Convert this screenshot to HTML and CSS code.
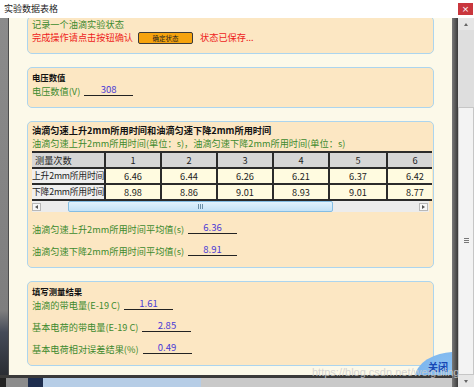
FILE: index.html
```html
<!DOCTYPE html>
<html lang="zh">
<head>
<meta charset="utf-8">
<title>实验数据表格</title>
<link rel="stylesheet" href="styles.css">
</head>
<body>
<div class="screen">
  <div class="titlebar">
    <span class="title">实验数据表格</span>
    <span class="win-close">×</span>
  </div>
  <div class="body">
    <div class="left-col">
      <div class="dialog-row">
        <div class="edge"></div>
        <div class="content">
          <div class="scroll">
            <section class="panel">
              <div class="line green">记录一个油滴实验状态</div>
              <div class="row red">
                <span>完成操作请点击按钮确认</span>
                <span class="btn">确定状态</span>
                <span>状态已保存...</span>
              </div>
            </section>

            <section class="panel">
              <div class="heading">电压数值</div>
              <div class="field"><span>电压数值(V)</span><span class="input">308</span></div>
            </section>

            <section class="panel">
              <div class="heading long">油滴匀速上升2mm所用时间和油滴匀速下降2mm所用时间</div>
              <div class="sub green">油滴匀速上升2mm所用时间(单位：s)，油滴匀速下降2mm所用时间(单位：s)</div>
              <div class="tablewrap">
                <table>
                  <colgroup>
                    <col class="c-label"><col class="c-n"><col class="c-n"><col class="c-n"><col class="c-n"><col class="c-w"><col class="c-n">
                  </colgroup>
                  <tr class="head">
                    <td class="label">测量次数</td><td>1</td><td>2</td><td>3</td><td>4</td><td>5</td><td>6</td>
                  </tr>
                  <tr>
                    <td class="label">上升2mm所用时间</td><td>6.46</td><td>6.44</td><td>6.26</td><td>6.21</td><td>6.37</td><td>6.42</td>
                  </tr>
                  <tr>
                    <td class="label">下降2mm所用时间</td><td>8.98</td><td>8.86</td><td>9.01</td><td>8.93</td><td>9.01</td><td>8.77</td>
                  </tr>
                </table>
              </div>
              <div class="hscroll">
                <span class="arrow"><span class="tri-left"></span></span>
                <span class="hs-gap"></span>
                <span class="thumb">
                  <svg width="6" height="5" viewBox="0 0 6 5"><path d="M0.5 0v5M2.5 0v5M4.5 0v5" stroke="#6a8fa8" stroke-width="1"/></svg>
                </span>
                <span class="hs-fill"></span>
                <span class="arrow"><span class="tri-right"></span></span>
              </div>
              <div class="avgs">
                <div class="field"><span>油滴匀速上升2mm所用时间平均值(s)</span><span class="input">6.36</span></div>
                <div class="field"><span>油滴匀速下降2mm所用时间平均值(s)</span><span class="input">8.91</span></div>
              </div>
            </section>

            <section class="panel">
              <div class="heading">填写测量结果</div>
              <div class="field"><span>油滴的带电量(E-19 C)</span><span class="input">1.61</span></div>
              <div class="field"><span>基本电荷的带电量(E-19 C)</span><span class="input">2.85</span></div>
              <div class="field"><span>基本电荷相对误差结果(%)</span><span class="input">0.49</span></div>
            </section>
          </div>
          <div class="close-btn">关闭</div>
        </div>
      </div>
      <div class="dialog-shadow"></div>
      <div class="backdrop">
        <span class="bd-dark"></span>
        <span class="bd-gray"></span>
        <span class="bd-navy"></span>
        <span class="bd-blue"></span>
        <span class="bd-rest"></span>
      </div>
    </div>
    <div class="side-shadow"></div>
    <div class="vscroll">
      <div class="vs-btn"><span class="tri-up"></span></div>
      <div class="vs-track"></div>
      <div class="vs-thumb">
        <svg width="5" height="6" viewBox="0 0 5 6"><path d="M0 0.5h5M0 2.5h5M0 4.5h5" stroke="#777" stroke-width="1"/></svg>
      </div>
      <div class="vs-btn"><span class="tri-down"></span></div>
    </div>
  </div>
  <div class="watermark">https://blog.csdn.net/weiguling</div>
</div>
</body>
</html>
```

FILE: styles.css
```css
* { box-sizing: border-box; margin: 0; padding: 0; }

body {
  margin: 0;
  width: 474px;
  height: 387px;
  overflow: hidden;
  background: #888;
  font-family: "Noto Sans CJK SC", "Noto Sans", sans-serif;
}

.screen {
  width: 474px;
  height: 387px;
  display: flex;
  flex-direction: column;
  position: relative;
}

.titlebar {
  height: 18px;
  background: #fff;
  display: flex;
  align-items: center;
  justify-content: space-between;
  padding: 0 1px 0 4px;
}

.title {
  font-size: 9px;
  line-height: 18px;
  color: #222;
}

.win-close {
  width: 15px;
  height: 12px;
  background: #c9363d;
  color: #fff;
  font-family: "DejaVu Sans", sans-serif;
  font-size: 9px;
  line-height: 12px;
  text-align: center;
}

.body {
  flex: 1;
  display: flex;
}

.left-col {
  width: 452px;
  display: flex;
  flex-direction: column;
}

.dialog-row {
  height: 357px;
  display: flex;
}

.edge {
  width: 9px;
  background: linear-gradient(#8b8b8b, #7e7e7e 82%, #454b58 88%, #2a2d33);
  border-right: 1px solid #4c4c4c;
}

.content {
  flex: 1;
  background: #fcf9e9;
  position: relative;
  overflow: hidden;
}

.scroll {
  display: flex;
  flex-direction: column;
  gap: 13px;
  padding: 0 18px;
  margin-top: -2px;
}

.panel {
  background: #fce7c3;
  border: 1px solid #acd5ee;
  border-radius: 5px;
  padding: 2px 4px 8px;
  font-size: 9.2px;
}

.line {
  line-height: 14px;
}

.panel:first-child .line {
  line-height: 11px;
}

.green { color: #3d8a2e; }
.red { color: #ee1c1c; }

.row {
  display: flex;
  align-items: center;
  height: 15px;
  line-height: 15px;
}

.btn {
  width: 55px;
  height: 12px;
  background: #f6a30e;
  border: 1px solid #3a3a3a;
  border-radius: 2px;
  font-size: 6.5px;
  line-height: 10px;
  text-align: center;
  color: #222;
  margin: 0 7px 0 5px;
}

.heading {
  font-weight: bold;
  font-size: 8.4px;
  line-height: 14px;
  color: #111;
}

.heading.long {
  font-size: 9.2px;
  line-height: 13px;
  white-space: nowrap;
}

.sub {
  line-height: 13px;
  margin-bottom: 1px;
  white-space: nowrap;
}

.field {
  display: flex;
  align-items: flex-start;
  height: 15px;
  line-height: 15px;
  color: #3d8a2e;
  white-space: nowrap;
}

.field + .field { margin-top: 7px; }

.input {
  width: 49px;
  height: 12px;
  border-bottom: 1px solid #222;
  margin-left: 4px;
  color: #4a3ad6;
  text-align: center;
  font-size: 9.5px;
  line-height: 11px;
}

.avgs { margin-top: 10px; }

.tablewrap {
  width: 400px;
  overflow: hidden;
}

table {
  border-collapse: collapse;
  table-layout: fixed;
  width: 411px;
  font-size: 9.2px;
  color: #222;
}

.c-label { width: 73px; }
.c-n { width: 56px; }
.c-w { width: 58px; }

td {
  border-top: 2px solid #2b2b2b;
  border-bottom: 2px solid #2b2b2b;
  border-right: 2px solid #2b2b2b;
  padding: 0;
  line-height: 14px;
  text-align: center;
  background: #fffbe0;
  white-space: nowrap;
  overflow: hidden;
}

td.label {
  text-align: left;
  background: #efefef;
  font-size: 8.8px;
  letter-spacing: -0.2px;
}

.head td { background: #d6d6d6; }
.head td.label { padding-left: 3px; font-size: 9.2px; letter-spacing: 0; }

.hscroll {
  width: 397px;
  height: 11px;
  display: flex;
  align-items: center;
  background: #ececec;
}

.arrow {
  width: 9px;
  height: 8px;
  border: 1px solid #b8b8b8;
  background: #f7f7f7;
  display: flex;
  align-items: center;
  justify-content: center;
  margin: 0 1px 0 0;
}

.tri-left {
  width: 0; height: 0;
  border-top: 2px solid transparent;
  border-bottom: 2px solid transparent;
  border-right: 3px solid #555;
}

.tri-right {
  width: 0; height: 0;
  border-top: 2px solid transparent;
  border-bottom: 2px solid transparent;
  border-left: 3px solid #555;
}

.hs-gap { width: 26px; }

.thumb {
  width: 265px;
  height: 11px;
  background: linear-gradient(#e1f2fd, #c3e2f7);
  border: 1px solid #84bde3;
  border-radius: 2px;
  display: flex;
  align-items: center;
  justify-content: center;
}

.hs-fill { flex: 1; }

.close-btn {
  position: absolute;
  left: 406px;
  top: 334px;
  width: 80px;
  height: 52px;
  border-radius: 50%;
  background: radial-gradient(circle at 40% 40%, #8cc2f2, #6eaaeb);
  color: #1747b5;
  font-weight: bold;
  font-size: 10px;
  line-height: 14px;
  padding: 8px 0 0 13px;
}

.dialog-shadow {
  height: 3px;
  background: #3a3a3a;
}

.backdrop {
  flex: 1;
  display: flex;
  background: #cfcfcf;
}

.bd-dark { width: 6px; background: #222; }
.bd-gray { width: 22px; background: #8c8c8c; }
.bd-navy { width: 15px; background: #1e2e4e; }
.bd-blue { width: 158px; background: #b6cde6; }
.bd-rest { flex: 1; background: #c9c9c9; }

.side-shadow {
  width: 6px;
  background: linear-gradient(to right, #7a7a7a, #3a3a3a);
}

.vscroll {
  width: 16px;
  background: #e6e6e6;
  display: flex;
  flex-direction: column;
}

.vs-btn {
  height: 12px;
  display: flex;
  align-items: center;
  justify-content: center;
}

.tri-up {
  width: 0; height: 0;
  border-left: 2px solid transparent;
  border-right: 2px solid transparent;
  border-bottom: 3px solid #666;
}

.tri-down {
  width: 0; height: 0;
  border-left: 2px solid transparent;
  border-right: 2px solid transparent;
  border-top: 3px solid #666;
}

.vs-track {
  height: 77px;
  background: #dedede;
}

.vs-thumb {
  flex: 1;
  background: #f3f3f3;
  border: 1px solid #c6c6c6;
  display: flex;
  align-items: center;
  justify-content: center;
}

.watermark {
  position: absolute;
  left: 312px;
  top: 366px;
  font-family: "Liberation Sans", sans-serif;
  font-size: 11px;
  color: rgba(205, 205, 205, 0.85);
  white-space: nowrap;
}
```
